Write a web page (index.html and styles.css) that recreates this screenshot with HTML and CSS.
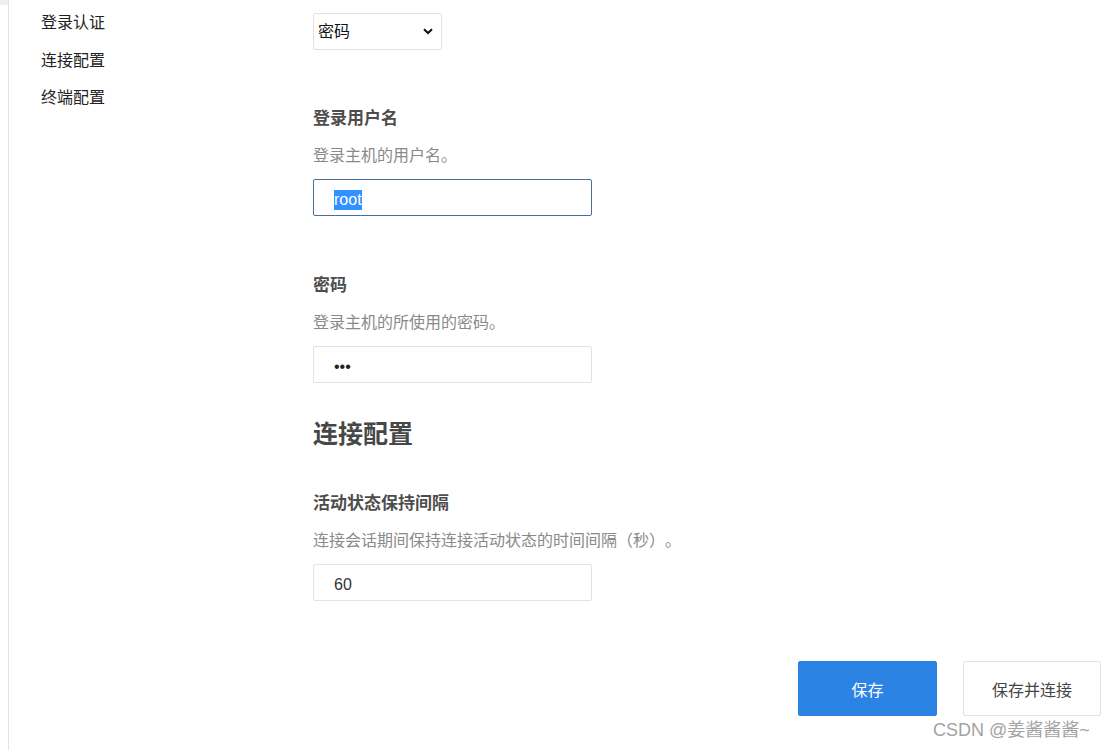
FILE: index.html
```html
<!DOCTYPE html>
<html lang="zh-CN">
<head>
<meta charset="utf-8">
<title>连接设置</title>
<link rel="stylesheet" href="styles.css">
</head>
<body>
<div class="page">
  <nav class="sidebar">
    <div class="nav-item">登录认证</div>
    <div class="nav-item">连接配置</div>
    <div class="nav-item">终端配置</div>
  </nav>
  <main class="main">
    <div class="select">
      <span class="select-text">密码</span>
      <svg class="chevron" width="10" height="7" viewBox="0 0 10 7"><path d="M1 1.2 L5 5 L9 1.2" fill="none" stroke="#111" stroke-width="2"/></svg>
    </div>

    <div class="field first">
      <div class="label">登录用户名</div>
      <div class="desc">登录主机的用户名。</div>
      <div class="input focused"><span class="sel">root</span></div>
    </div>

    <div class="field">
      <div class="label">密码</div>
      <div class="desc">登录主机的所使用的密码。</div>
      <div class="input"><span class="dots">•••</span></div>
    </div>

    <h2 class="section-title">连接配置</h2>

    <div class="field after-title">
      <div class="label">活动状态保持间隔</div>
      <div class="desc">连接会话期间保持连接活动状态的时间间隔（秒）。</div>
      <div class="input"><span class="value">60</span></div>
    </div>

    <div class="actions">
      <button class="btn btn-primary">保存</button>
      <button class="btn btn-default">保存并连接</button>
    </div>
  </main>
</div>
<div class="watermark">CSDN @姜酱酱酱~</div>
</body>
</html>
```

FILE: styles.css
```css
html, body {
  margin: 0;
  padding: 0;
  background: #ffffff;
}

body {
  font-family: "Liberation Sans", "Noto Sans CJK SC", sans-serif;
  color: #333;
  width: 1107px;
  height: 750px;
  overflow: hidden;
  position: relative;
  text-spacing-trim: space-all;
}

.page {
  display: flex;
  margin-left: 8px;
  border-left: 1px solid #e4e4e4;
  min-height: 750px;
  position: relative;
}

.page::before {
  content: "";
  position: absolute;
  left: -9px;
  top: 0;
  width: 8px;
  height: 5px;
  background: #f0f0f0;
}

.sidebar {
  width: 272px;
  padding-left: 32px;
  padding-top: 4px;
  flex-shrink: 0;
}

.nav-item {
  font-size: 16px;
  line-height: 37.5px;
  color: #222;
}

.main {
  flex: 1;
  display: flex;
  flex-direction: column;
  padding-right: 6px;
}

.select {
  margin-top: 13px;
  height: 35px;
  border: 1px solid #e2e2e2;
  border-radius: 2px;
  display: flex;
  align-items: center;
  justify-content: space-between;
  padding: 0 8px 3px 4px;
  box-sizing: border-box;
  width: 129px;
  height: 37px;
}

.select-text {
  font-size: 16px;
  color: #111;
}

.chevron {
  display: block;
  margin-top: 2px;
}

.field {
  display: flex;
  flex-direction: column;
  margin-top: 58px;
}

.field.first {
  margin-top: 57px;
}

.field.after-title {
  margin-top: 42px;
}

.label {
  font-size: 17px;
  line-height: 24px;
  font-weight: 700;
  color: #4d4d4d;
}

.desc {
  font-size: 16px;
  line-height: 22px;
  color: #8a8a8a;
  margin-top: 14px;
}

.input {
  margin-top: 12px;
  width: 279px;
  height: 37px;
  box-sizing: border-box;
  border: 1px solid #e3e3e3;
  border-radius: 2px;
  padding: 4px 0 0 20px;
  display: flex;
  align-items: center;
  font-size: 16px;
  color: #222;
}

.input.focused {
  border-color: #4a6f9e;
}

.sel {
  background: #3390ff;
  color: #ffffff;
  line-height: 20px;
}

.dots {
  font-size: 16px;
  color: #222;
}

.value {
  color: #333;
}

.section-title {
  margin: 35px 0 0 0;
  font-size: 25px;
  line-height: 32px;
  font-weight: 700;
  color: #474747;
}

.actions {
  display: flex;
  justify-content: flex-end;
  gap: 26px;
  margin-top: 60px;
}

.btn {
  height: 55px;
  font-family: "Liberation Sans", "Noto Sans CJK SC", sans-serif;
  font-size: 16px;
  border-radius: 2px;
  cursor: pointer;
}

.btn-primary {
  width: 139px;
  background: #2b83e3;
  color: #ffffff;
  border: 1px solid #2b83e3;
}

.btn-default {
  width: 138px;
  background: #ffffff;
  color: #444;
  border: 1px solid #e2e2e2;
}

.watermark {
  position: absolute;
  left: 933px;
  top: 719px;
  font-size: 18px;
  line-height: 22px;
  color: #a3a3a3;
}
```
